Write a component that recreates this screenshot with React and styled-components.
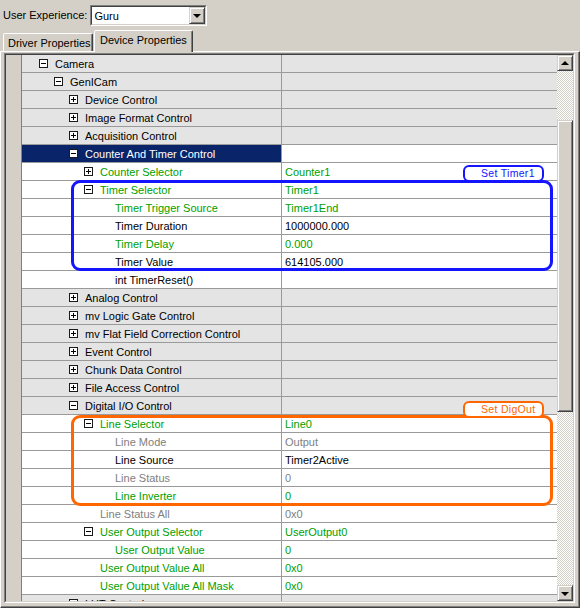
import styled, { createGlobalStyle } from "styled-components";

const GREEN = "#00a000";
const GRAY = "#808080";
const LINE = "#9a9a9a";
const FACE = "#d4d0c8";

const TONES = {
  green: GREEN,
  gray: GRAY,
  black: "#000",
};

const ROWS = [
  { name: "Camera", level: 0, exp: "-", cat: true },
  { name: "GenICam", level: 1, exp: "-", cat: true },
  { name: "Device Control", level: 2, exp: "+", cat: true },
  { name: "Image Format Control", level: 2, exp: "+", cat: true },
  { name: "Acquisition Control", level: 2, exp: "+", cat: true },
  { name: "Counter And Timer Control", level: 2, exp: "-", cat: true, selected: true },
  { name: "Counter Selector", level: 3, exp: "+", tone: "green", value: "Counter1" },
  { name: "Timer Selector", level: 3, exp: "-", tone: "green", value: "Timer1" },
  { name: "Timer Trigger Source", level: 4, tone: "green", value: "Timer1End" },
  { name: "Timer Duration", level: 4, tone: "black", value: "1000000.000" },
  { name: "Timer Delay", level: 4, tone: "green", value: "0.000" },
  { name: "Timer Value", level: 4, tone: "black", value: "614105.000" },
  { name: "int TimerReset()", level: 4, tone: "black", value: "" },
  { name: "Analog Control", level: 2, exp: "+", cat: true },
  { name: "mv Logic Gate Control", level: 2, exp: "+", cat: true },
  { name: "mv Flat Field Correction Control", level: 2, exp: "+", cat: true },
  { name: "Event Control", level: 2, exp: "+", cat: true },
  { name: "Chunk Data Control", level: 2, exp: "+", cat: true },
  { name: "File Access Control", level: 2, exp: "+", cat: true },
  { name: "Digital I/O Control", level: 2, exp: "-", cat: true },
  { name: "Line Selector", level: 3, exp: "-", tone: "green", value: "Line0" },
  { name: "Line Mode", level: 4, tone: "gray", value: "Output" },
  { name: "Line Source", level: 4, tone: "black", value: "Timer2Active" },
  { name: "Line Status", level: 4, tone: "gray", value: "0" },
  { name: "Line Inverter", level: 4, tone: "green", value: "0" },
  { name: "Line Status All", level: 3, tone: "gray", value: "0x0" },
  { name: "User Output Selector", level: 3, exp: "-", tone: "green", value: "UserOutput0" },
  { name: "User Output Value", level: 4, tone: "green", value: "0" },
  { name: "User Output Value All", level: 3, tone: "green", value: "0x0" },
  { name: "User Output Value All Mask", level: 3, tone: "green", value: "0x0" },
  { name: "LUT Control", level: 2, exp: "+", cat: true },
];

const GlobalStyle = createGlobalStyle`
  html, body {
    margin: 0;
    padding: 0;
    background: ${FACE};
  }
  body {
    font-family: "Liberation Sans", Arial, sans-serif;
    font-size: 11px;
    color: #000;
    overflow: hidden;
  }
`;

const Page = styled.div`
  position: relative;
  width: 580px;
  height: 608px;
  display: flex;
  flex-direction: column;
  background: ${FACE};
  overflow: hidden;
`;

const Toolbar = styled.div`
  height: 29px;
  box-sizing: border-box;
  padding: 5px 0 0 3px;
  display: flex;
  align-items: flex-start;
  gap: 3px;
`;

const Label = styled.span`
  line-height: 21px;
`;

const Combo = styled.div`
  box-sizing: border-box;
  width: 117px;
  height: 21px;
  border: 1px solid;
  border-color: #808080 #fff #fff #808080;
`;

const ComboInner = styled.div`
  box-sizing: border-box;
  height: 100%;
  border: 1px solid;
  border-color: #404040 ${FACE} ${FACE} #404040;
  background: #fff;
  display: flex;
  align-items: center;
  justify-content: space-between;
  padding-left: 2px;
`;

const RaisedButton = styled.div`
  box-sizing: border-box;
  width: 16px;
  height: ${(p) => p.$h || 16}px;
  flex: none;
  border: 1px solid;
  border-color: ${FACE} #404040 #404040 ${FACE};
  box-shadow: inset 1px 1px #fff, inset -1px -1px #808080;
  background: ${FACE};
  display: flex;
  align-items: center;
  justify-content: center;
`;

const Arrow = styled.span`
  width: 0;
  height: 0;
  border-left: 4px solid transparent;
  border-right: 4px solid transparent;
  ${(p) =>
    p.$up
      ? "border-bottom: 4px solid #000; margin-top: -1px;"
      : "border-top: 4px solid #000; margin-top: 1px;"}
`;

const TabStrip = styled.div`
  height: 22px;
  display: flex;
  align-items: flex-end;
  padding-left: 3px;
`;

const Tab = styled.div`
  position: relative;
  z-index: 1;
  box-sizing: border-box;
  width: ${(p) => p.$w}px;
  height: ${(p) => (p.$active ? 22 : 18)}px;
  margin-left: ${(p) => (p.$active ? 1 : 0)}px;
  margin-bottom: ${(p) => (p.$active ? -1 : 0)}px;
  padding: ${(p) => (p.$active ? "2px 0 0 5px" : "2px 0 0 4px")};
  border: 1px solid;
  border-bottom: none;
  border-color: #fff #404040 transparent #fff;
  border-radius: 2px 2px 0 0;
  box-shadow: inset -1px 0 #808080;
  background: ${FACE};
  white-space: nowrap;
  line-height: 14px;
`;

const Panel = styled.div`
  flex: 1;
  min-height: 0;
  display: flex;
  box-sizing: border-box;
  padding: 1px 4px 4px 3px;
  border: 1px solid;
  border-color: #fff #404040 #404040 #fff;
  box-shadow: inset -1px -1px #808080;
`;

const GridOuter = styled.div`
  flex: 1;
  display: flex;
  border: 1px solid;
  border-color: #808080 #fff #fff #808080;
`;

const GridInner = styled.div`
  flex: 1;
  display: flex;
  border: 1px solid;
  border-color: #404040 ${FACE} ${FACE} #404040;
  overflow: hidden;
`;

const Gutter = styled.div`
  width: 15px;
  flex: none;
  background: ${FACE};
  border-right: 1px solid #808080;
`;

const Tree = styled.div`
  flex: 1;
  min-width: 0;
  overflow: hidden;
  background: #fff;
`;

const Row = styled.div`
  display: flex;
  height: 18px;
  box-sizing: border-box;
  border-bottom: 1px solid ${LINE};
`;

const NameCell = styled.div`
  width: 260px;
  flex: none;
  display: flex;
  align-items: center;
  box-sizing: border-box;
  padding-left: ${(p) => 17 + p.$level * 15}px;
  border-right: 1px solid ${LINE};
  background: ${(p) => (p.$selected ? "#0a246a" : p.$cat ? "#e4e4e4" : "#fff")};
  color: ${(p) => (p.$selected ? "#fff" : TONES[p.$tone] || "#000")};
  white-space: nowrap;
`;

const ValueCell = styled.div`
  flex: 1;
  display: flex;
  align-items: center;
  padding-left: 3px;
  background: ${(p) => (p.$cat ? "#e4e4e4" : "#fff")};
  color: ${(p) => TONES[p.$tone] || "#000"};
  white-space: nowrap;
`;

const Expander = styled.span`
  position: relative;
  box-sizing: border-box;
  width: 9px;
  height: 9px;
  flex: none;
  margin-right: 7px;
  border: 1px solid #1a1a1a;
  background: #fff;

  &::before {
    content: "";
    position: absolute;
    left: 1px;
    top: 3px;
    width: 5px;
    height: 1px;
    background: #000;
  }

  &::after {
    content: "";
    display: ${(p) => (p.$open ? "none" : "block")};
    position: absolute;
    left: 3px;
    top: 1px;
    width: 1px;
    height: 5px;
    background: #000;
  }
`;

const Leaf = styled.span`
  margin-left: 16px;
`;

const Scrollbar = styled.div`
  width: 16px;
  flex: none;
  display: flex;
  flex-direction: column;
`;

const Track = styled.div`
  flex: 1;
  display: flex;
  flex-direction: column;
  background-image: conic-gradient(#fff 25%, ${FACE} 0 50%, #fff 0 75%, ${FACE} 0);
  background-size: 2px 2px;
`;

const TrackGap = styled.div`
  height: ${(p) => p.$h}px;
  flex: none;
`;

const Callout = styled.div`
  position: absolute;
  left: 71px;
  top: ${(p) => p.$top}px;
  width: 482px;
  height: 91px;
  box-sizing: border-box;
  border: 3px solid ${(p) => p.$color};
  border-radius: 9px;
  pointer-events: none;
`;

const CalloutTag = styled.div`
  position: absolute;
  left: 463px;
  top: ${(p) => p.$top}px;
  width: 81px;
  height: 17px;
  box-sizing: border-box;
  padding-left: 16px;
  border: 2px solid ${(p) => p.$color};
  border-radius: 6px;
  background: #fff;
  color: ${(p) => p.$color};
  font-size: 10.5px;
  letter-spacing: 0.3px;
  line-height: 13px;
  white-space: nowrap;
`;

const PropertyRow = ({ row }) => (
  <Row>
    <NameCell
      $level={row.level}
      $cat={row.cat}
      $selected={row.selected}
      $tone={row.tone}
    >
      {row.exp ? <Expander $open={row.exp === "-"} /> : <Leaf />}
      {row.name}
    </NameCell>
    <ValueCell $cat={row.cat && !row.selected} $tone={row.tone}>
      {row.value}
    </ValueCell>
  </Row>
);

const App = () => {
  return (
    <Page>
      <GlobalStyle />
      <Toolbar>
        <Label>User Experience:</Label>
        <Combo>
          <ComboInner>
            <span>Guru</span>
            <RaisedButton $h={17}>
              <Arrow />
            </RaisedButton>
          </ComboInner>
        </Combo>
      </Toolbar>
      <TabStrip>
        <Tab $w={90}>Driver Properties</Tab>
        <Tab $w={99} $active>
          Device Properties
        </Tab>
      </TabStrip>
      <Panel>
        <GridOuter>
          <GridInner>
            <Gutter />
            <Tree>
              {ROWS.map((row) => (
                <PropertyRow key={row.name} row={row} />
              ))}
            </Tree>
            <Scrollbar>
              <RaisedButton>
                <Arrow $up />
              </RaisedButton>
              <Track>
                <TrackGap $h={49} />
                <RaisedButton $h={292} />
              </Track>
              <RaisedButton>
                <Arrow />
              </RaisedButton>
            </Scrollbar>
          </GridInner>
        </GridOuter>
      </Panel>

      <Callout $top={180} $color="#1414ff" />
      <CalloutTag $top={165} $color="#1414ff">
        Set Timer1
      </CalloutTag>
      <Callout $top={415} $color="#ff6600" />
      <CalloutTag $top={401} $color="#ff6600">
        Set DigOut
      </CalloutTag>
    </Page>
  );
};

export default App;
